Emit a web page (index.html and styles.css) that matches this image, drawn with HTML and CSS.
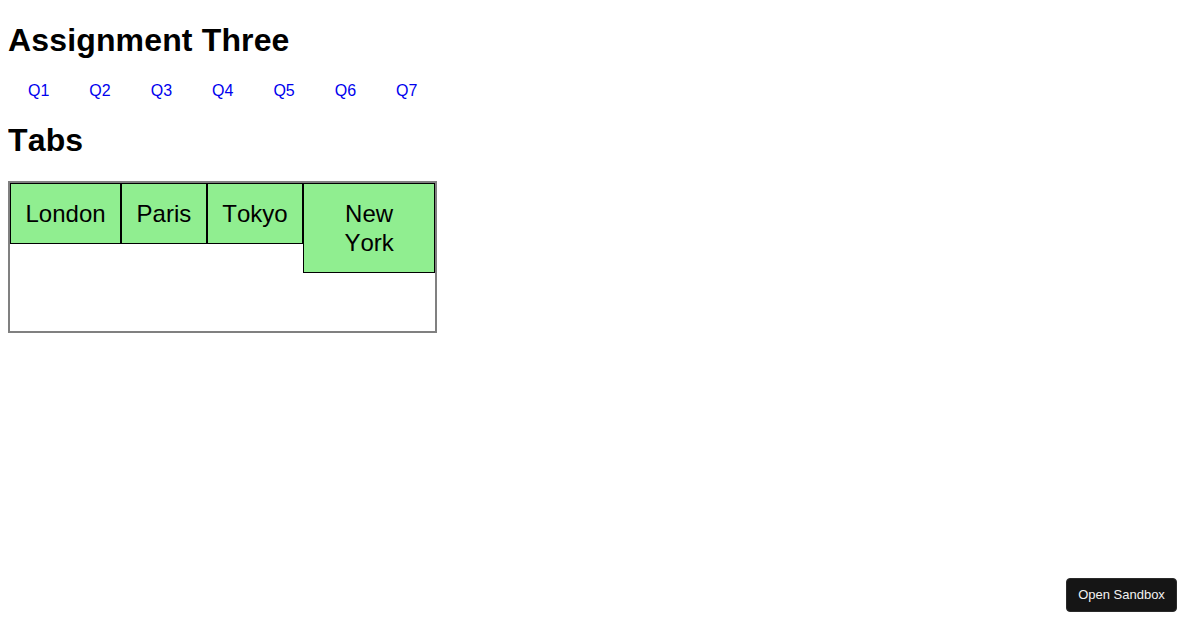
FILE: index.html
```html
<!DOCTYPE html>
<html lang="en">
<head>
<meta charset="utf-8">
<title>Assignment Three</title>
<link rel="stylesheet" href="styles.css">
</head>
<body>
<h1 class="title">Assignment Three</h1>
<nav class="nav">
  <a class="nav-link" href="#">Q1</a>
  <a class="nav-link" href="#">Q2</a>
  <a class="nav-link" href="#">Q3</a>
  <a class="nav-link" href="#">Q4</a>
  <a class="nav-link" href="#">Q5</a>
  <a class="nav-link" href="#">Q6</a>
  <a class="nav-link" href="#">Q7</a>
</nav>
<h1 class="title">Tabs</h1>
<div class="tabs">
  <div class="tab-row">
    <div class="tab">London</div>
    <div class="tab">Paris</div>
    <div class="tab">Tokyo</div>
    <div class="tab">New York</div>
  </div>
</div>
<button class="sandbox-btn" type="button">Open Sandbox</button>
</body>
</html>
```
FILE: styles.css
```css
html {
  margin: 0;
  padding: 0;
}

body {
  margin: 0 8px 8px;
  padding: 1px 0 0;
  font-family: "Liberation Sans", Arial, sans-serif;
  font-kerning: none;
  color: #000;
  background: #fff;
}

.title {
  font-size: 32px;
  font-weight: bold;
  margin: 21.44px 0;
  letter-spacing: 0.15px;
}

.nav {
  display: flex;
  height: 20px;
  align-items: center;
}

.nav-link {
  padding: 0 20px;
  color: #0000ee;
  text-decoration: none;
  font-size: 16px;
}

.tabs {
  width: 425px;
  height: 148px;
  margin-top: 1px;
  border: 2px solid #808080;
}

.tab-row {
  display: flex;
  align-items: flex-start;
}

.tab {
  background: #90ee90;
  border: 1px solid #000;
  padding: 15px 14.5px;
  font-size: 24px;
  line-height: 29px;
  text-align: center;
}

.sandbox-btn {
  position: fixed;
  right: 23px;
  bottom: 18px;
  width: 111px;
  height: 34px;
  background: #151515;
  color: #f2f2f2;
  border: 1px solid #2a2a2a;
  border-radius: 4px;
  font-family: "Liberation Sans", Arial, sans-serif;
  font-size: 13px;
  padding: 0 0 2px;
}
```
